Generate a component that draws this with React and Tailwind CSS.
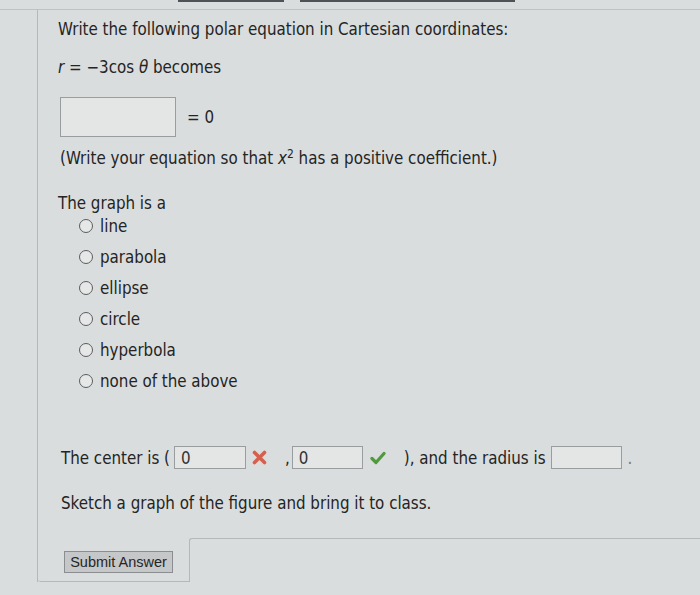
import React from 'react'

const font = { fontFamily: '"DejaVu Sans Condensed", "DejaVu Sans", Verdana, sans-serif' }

function Radio({ label, first }) {
  return (
    <div className={`flex h-[20px] items-center ${first ? 'mt-[3px]' : 'mt-[11px]'}`}>
      <span className="ml-[21px] h-[14px] w-[14px] rounded-full border-[1.5px] border-[#5a5d60] bg-[#e6e8e8]" />
      <span className="ml-[7px]">{label}</span>
    </div>
  )
}

function Box({ value, w }) {
  return (
    <div className={`flex h-[23px] ${w} items-center border border-[#9a9d9f] bg-[#e4e6e6] pl-[6px] text-[#333]`}>
      {value}
    </div>
  )
}

export default function App() {
  const choices = ['line', 'parabola', 'ellipse', 'circle', 'hyperbola', 'none of the above']

  return (
    <div className="min-h-[595px] w-[700px] overflow-hidden bg-[#dadddd] text-[16.8px] leading-[20px] text-[#242424]" style={font}>
      {/* tab strip */}
      <div className="flex h-[10px] border-b border-[#bfc2c3]">
        <div className="ml-[178px] h-[2px] w-[106px] bg-[#4d5257]" />
        <div className="ml-[16px] h-[2px] w-[215px] bg-[#4d5257]" />
      </div>

      <div className="ml-[37px] border-l border-[#b4b8b9]">
        <div className="pl-[20px] pt-[9px]">
          <p>Write the following polar equation in Cartesian coordinates:</p>

          <p className="mt-[18px]">
            <i>r</i> = −3cos <i>θ</i> becomes
          </p>

          <div className="mt-[20px] flex items-center">
            <div className="ml-[2px] h-[40px] w-[116px] border border-[#9a9d9f] bg-[#e4e6e6]" />
            <span className="ml-[11px]">= 0</span>
          </div>

          <p className="mt-[11px] pl-[2px]">
            (Write your equation so that <i>x</i>
            <sup className="text-[12px]">2</sup> has a positive coefficient.)
          </p>

          <p className="mt-[25px]">The graph is a</p>
          {choices.map((c, i) => (
            <Radio key={c} label={c} first={i === 0} />
          ))}

          <div className="mt-[55px] flex items-center pl-[3px]">
            <span>The center is (</span>
            <span className="ml-[4px]"><Box value="0" w="w-[72px]" /></span>
            <svg width="15" height="15" viewBox="0 0 15 15" className="ml-[6px]">
              <path d="M2.5 2.5 L12.5 12.5 M12.5 2.5 L2.5 12.5" stroke="#d5604e" strokeWidth="3.6" strokeLinecap="round" />
            </svg>
            <span className="ml-[18px]">,</span>
            <span className="ml-[2px]"><Box value="0" w="w-[71px]" /></span>
            <svg width="16" height="14" viewBox="0 0 16 14" className="ml-[7px]">
              <path d="M2 7.5 L6 11.5 L14 2.5" fill="none" stroke="#4f9a3c" strokeWidth="3.2" strokeLinecap="round" strokeLinejoin="round" />
            </svg>
            <span className="ml-[18px]">), and the radius is</span>
            <span className="ml-[5px]"><Box value="" w="w-[71px]" /></span>
            <span className="ml-[6px] text-[#777]">.</span>
          </div>

          <p className="mt-[24px] pl-[3px]">Sketch a graph of the figure and bring it to class.</p>
        </div>

        <div className="mt-[25px] flex">
          <div className="h-[44px] w-[151px] rounded-bl-[3px] border-b border-[#b4b8b9] pl-[26px] pt-[13px]">
            <button
              className="h-[22px] w-[109px] border border-[#8b8e90] bg-[#c5c7c8] text-[14.5px] leading-[20px] text-[#262626]"
              style={{ fontFamily: '"Liberation Sans", Arial, sans-serif' }}
            >
              Submit Answer
            </button>
          </div>
          <div className="flex-1 rounded-tl-[3px] border-l border-t border-[#b4b8b9]" />
        </div>
      </div>
    </div>
  )
}
